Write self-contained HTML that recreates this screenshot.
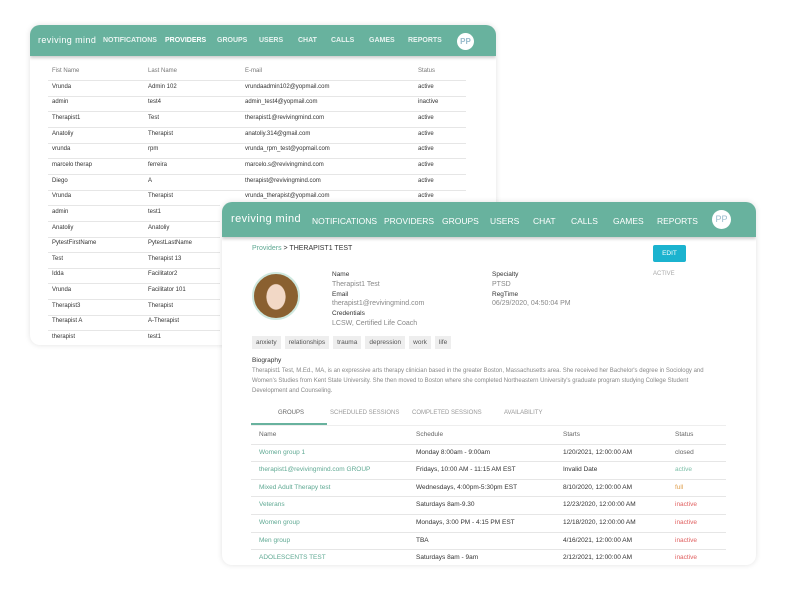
<!DOCTYPE html>
<html><head><meta charset="utf-8"><style>
*{margin:0;padding:0;box-sizing:border-box}
body{width:800px;height:599px;background:#fff;font-family:"Liberation Sans",sans-serif;position:relative;overflow:hidden}
.card{position:absolute;background:#fff;border-radius:10px;box-shadow:0 0 6px rgba(0,0,0,.12);overflow:hidden}
.hdr{position:absolute;left:0;top:0;right:0;background:#68b29e;color:#fff;box-shadow:0 2px 3px rgba(0,0,0,.2)}
.hdr span{position:absolute;white-space:nowrap}
.logo{font-family:"Liberation Sans",sans-serif;letter-spacing:.4px}
.pp{background:#fff;color:#9bc;border-radius:50%;text-align:center;font-size:8px}
.t{position:absolute;white-space:nowrap;color:#333}
.ln{position:absolute;height:1px;background:#e6e6e6}
.g{color:#5fa993}
</style></head><body>

<div class="card" style="left:30px;top:25px;width:466px;height:320px;">
 <div class="hdr" style="height:31px;font-size:7px;font-weight:bold">
  <span class="logo" style="left:8px;top:10px;font-size:9px;font-weight:normal">reviving mind</span>
  <span style="left:73px;top:12px;opacity:.85">NOTIFICATIONS</span>
  <span style="left:135px;top:12px">PROVIDERS</span>
  <span style="left:187px;top:12px;opacity:.85">GROUPS</span>
  <span style="left:229px;top:12px;opacity:.85">USERS</span>
  <span style="left:268px;top:12px;opacity:.85">CHAT</span>
  <span style="left:301px;top:12px;opacity:.85">CALLS</span>
  <span style="left:339px;top:12px;opacity:.85">GAMES</span>
  <span style="left:378px;top:12px;opacity:.85">REPORTS</span>
  <span class="pp" style="left:427px;top:8px;width:17px;height:17px;line-height:17px">PP</span>
 </div>
</div>
<div id="back" style="position:absolute;left:0;top:0;font-size:6px"></div>

<div class="card" style="left:222px;top:202px;width:534px;height:363px;">
 <div class="hdr" style="height:35px;font-size:8.5px">
  <span class="logo" style="left:9px;top:11px;font-size:11px">reviving mind</span>
  <span style="left:90px;top:14px">NOTIFICATIONS</span>
  <span style="left:162px;top:14px">PROVIDERS</span>
  <span style="left:220px;top:14px">GROUPS</span>
  <span style="left:268px;top:14px">USERS</span>
  <span style="left:311px;top:14px">CHAT</span>
  <span style="left:349px;top:14px">CALLS</span>
  <span style="left:391px;top:14px">GAMES</span>
  <span style="left:435px;top:14px">REPORTS</span>
  <span class="pp" style="left:490px;top:8px;width:19px;height:19px;line-height:19px;font-size:9px">PP</span>
 </div>
</div>

<div style="position:absolute;left:0;top:0;font-size:7px">
 <span class="t" style="left:252px;top:245px;font-size:7px"><span class="g">Providers</span> &gt; THERAPIST1 TEST</span>
 <div style="position:absolute;left:653px;top:245px;width:33px;height:17px;background:#1bb3cf;border-radius:2px;color:#fff;font-size:6.5px;text-align:center;line-height:17px">EDIT</div>
 <span class="t" style="left:653px;top:271px;font-size:6px;color:#aaa">ACTIVE</span>
 <div style="position:absolute;left:252px;top:272px;width:48px;height:48px;border-radius:50%;border:2px solid #cfe8df;background:radial-gradient(ellipse 30% 40% at 50% 52%,#f2d8c6 0 70%,#8a6030 75%),radial-gradient(circle at 50% 50%,#b08a40 0 55%,#c4a84a 56%)"></div>
 <span class="t" style="left:332px;top:271px;font-size:6.5px">Name</span>
 <span class="t" style="left:332px;top:281px;color:#888">Therapist1 Test</span>
 <span class="t" style="left:332px;top:291px;font-size:6.5px">Email</span>
 <span class="t" style="left:332px;top:300px;color:#888">therapist1@revivingmind.com</span>
 <span class="t" style="left:332px;top:310px;font-size:6.5px">Credentials</span>
 <span class="t" style="left:332px;top:320px;color:#888">LCSW, Certified Life Coach</span>
 <span class="t" style="left:492px;top:271px;font-size:6.5px">Specialty</span>
 <span class="t" style="left:492px;top:281px;color:#888">PTSD</span>
 <span class="t" style="left:492px;top:291px;font-size:6.5px">RegTime</span>
 <span class="t" style="left:492px;top:300px;color:#888">06/29/2020, 04:50:04 PM</span>
 <div style="position:absolute;left:252px;top:336px;display:flex;gap:4px;font-size:6.5px;color:#555">
  <span style="background:#eee;padding:3px 4px">anxiety</span><span style="background:#eee;padding:3px 4px">relationships</span><span style="background:#eee;padding:3px 4px">trauma</span><span style="background:#eee;padding:3px 4px">depression</span><span style="background:#eee;padding:3px 4px">work</span><span style="background:#eee;padding:3px 4px">life</span>
 </div>
 <span class="t" style="left:252px;top:357px;font-size:6.5px">Biography</span>
 <div style="position:absolute;left:252px;top:366px;width:470px;font-size:6px;line-height:10px;color:#888">Therapist1 Test, M.Ed., MA, is an expressive arts therapy clinician based in the greater Boston, Massachusetts area. She received her Bachelor's degree in Sociology and Women's Studies from Kent State University. She then moved to Boston where she completed Northeastern University's graduate program studying College Student Development and Counseling.</div>
 <span class="t" style="left:278px;top:410px;font-size:6px;color:#666">GROUPS</span>
 <span class="t" style="left:330px;top:410px;font-size:6px;color:#999">SCHEDULED SESSIONS</span>
 <span class="t" style="left:412px;top:410px;font-size:6px;color:#999">COMPLETED SESSIONS</span>
 <span class="t" style="left:504px;top:410px;font-size:6px;color:#999">AVAILABILITY</span>
 <div class="ln" style="left:251px;top:425px;width:475px;background:#eee"></div>
 <div style="position:absolute;left:251px;top:423px;width:76px;height:2px;background:#68b29e"></div>
</div>
<div id="front" style="position:absolute;left:0;top:0;font-size:6.5px"></div>

<script>
var b=[["Fist Name","Last Name","E-mail","Status"],["Vrunda","Admin 102","vrundaadmin102@yopmail.com","active"],["admin","test4","admin_test4@yopmail.com","inactive"],["Therapist1","Test","therapist1@revivingmind.com","active"],["Anatoliy","Therapist","anatoliy.314@gmail.com","active"],["vrunda","rpm","vrunda_rpm_test@yopmail.com","active"],["marcelo therap","ferreira","marcelo.s@revivingmind.com","active"],["Diego","A","therapist@revivingmind.com","active"],["Vrunda","Therapist","vrunda_therapist@yopmail.com","active"],["admin","test1","",""],["Anatoliy","Anatoliy","",""],["PytestFirstName","PytestLastName","",""],["Test","Therapist 13","",""],["Idda","Facilitator2","",""],["Vrunda","Facilitator 101","",""],["Therapist3","Therapist","",""],["Therapist A","A-Therapist","",""],["therapist","test1","",""]];
var h="",xs=[52,148,245,418];
b.forEach(function(r,i){var y=68+i*15.65;r.forEach(function(c,j){h+='<span class="t" style="left:'+xs[j]+'px;top:'+y+'px;color:'+(i?'#333':'#777')+'">'+c+'</span>'});if(i<b.length-1)h+='<div class="ln" style="left:48px;top:'+(y+12)+'px;width:'+(i<8?'418':'172')+'px"></div>'});
document.getElementById('back').innerHTML=h;
var f=[["Name","Schedule","Starts","Status"],["Women group 1","Monday 8:00am - 9:00am","1/20/2021, 12:00:00 AM","closed"],["therapist1@revivingmind.com GROUP","Fridays, 10:00 AM - 11:15 AM EST","Invalid Date","active"],["Mixed Adult Therapy test","Wednesdays, 4:00pm-5:30pm EST","8/10/2020, 12:00:00 AM","full"],["Veterans","Saturdays 8am-9.30","12/23/2020, 12:00:00 AM","inactive"],["Women group","Mondays, 3:00 PM - 4:15 PM EST","12/18/2020, 12:00:00 AM","inactive"],["Men group","TBA","4/16/2021, 12:00:00 AM","inactive"],["ADOLESCENTS TEST","Saturdays 8am - 9am","2/12/2021, 12:00:00 AM","inactive"]];
var sc={closed:"#666",active:"#7cbfa8",full:"#e0a050",inactive:"#e06060"};
h="";var fx=[259,416,563,675];
f.forEach(function(r,i){var y=431+i*17.6;r.forEach(function(c,j){var col=i==0?'#666':(j==0?'#5fa993':(j==3?sc[c]:'#333'));h+='<span class="t" style="left:'+fx[j]+'px;top:'+y+'px;color:'+col+'">'+c+'</span>'});if(i<f.length-1)h+='<div class="ln" style="left:251px;top:'+(y+12.5)+'px;width:475px"></div>'});
document.getElementById('front').innerHTML=h;
</script>
</body></html>
